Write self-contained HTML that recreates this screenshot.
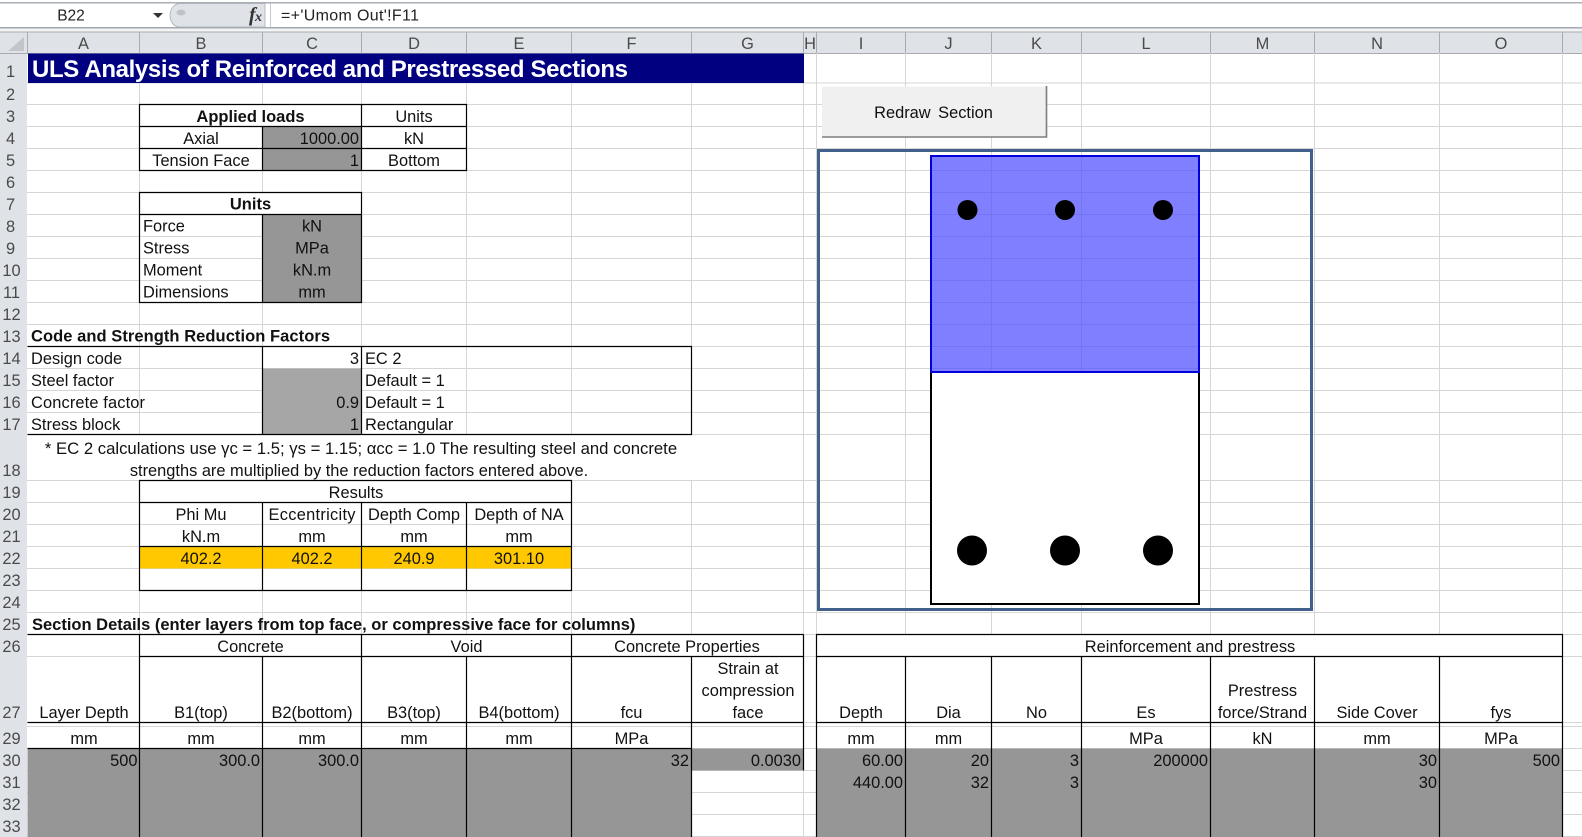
<!DOCTYPE html>
<html><head><meta charset="utf-8"><title>ULS Analysis</title>
<style>
html,body{margin:0;padding:0;background:#fff;overflow:hidden}
svg{display:block}
text{font-family:"Liberation Sans",Arial,sans-serif;font-size:16.4px;fill:#111}
.h text{fill:#4a4a4a;text-anchor:middle}
.c text,text.c{text-anchor:middle}
.r text,text.r{text-anchor:end}
.b{font-weight:bold;font-size:16.5px}
.g{stroke:#d6d6d6;stroke-width:1;fill:none}
.k{stroke:#000;stroke-width:1.2;fill:none}
.hb{stroke:#a8acb2;stroke-width:1;fill:none}
</style></head><body>
<svg xmlns="http://www.w3.org/2000/svg" width="1582" height="837" viewBox="0 0 1582 837">
<rect width="1582" height="837" fill="#fff"/>
<!-- top bars -->
<rect x="0" y="2" width="1582" height="1.5" fill="#a9afb6"/>
<rect x="0" y="27" width="1582" height="1.5" fill="#a3a9b0"/>
<rect x="0" y="28.5" width="1582" height="3" fill="#f3f4f6"/>
<path d="M265 3.5H180C174 3.5 170 9 170 15.5S174 27 180 27H265Z" fill="#dfe3e8" stroke="#a9aeb4" stroke-width=".8"/>
<ellipse cx="181" cy="12.5" rx="4.5" ry="3" fill="#bfc3c9"/>
<path d="M153 13H163L158 18Z" fill="#333"/>
<rect x="270" y="3.5" width="1" height="23.5" fill="#c6cacf"/>
<text x="71" y="20.5" class="c" style="font-size:15.5px;fill:#222">B22</text>
<text x="249" y="21" style="font-family:'Liberation Serif',serif;font-style:italic;font-weight:bold;font-size:20px;fill:#333">f</text>
<text x="255" y="21" style="font-family:'Liberation Serif',serif;font-style:italic;font-weight:bold;font-size:14px;fill:#333">x</text>
<text x="281" y="20.5" style="font-size:16px;fill:#222" textLength="138">=+'Umom Out'!F11</text>

<!-- column + row headers -->
<rect x="0" y="32" width="1582" height="21.5" fill="#dfe3e8"/>
<rect x="0" y="53.5" width="27" height="783.5" fill="#dfe3e8"/>
<path d="M8 51H24V37Z" fill="#c2c6cb"/>
<path class="hb" d="M0 32H1582M0 53.5H1582M27.5 32V53M139.5 32V53M262.5 32V53M361.5 32V53M466.5 32V53M571.5 32V53M691.5 32V53M803.5 32V53M816.5 32V53M905.5 32V53M991.5 32V53M1081.5 32V53M1210.5 32V53M1314.5 32V53M1439.5 32V53M1562.5 32V53"/>
<g class="h">
<text x="83.5" y="49">A</text><text x="201" y="49">B</text><text x="312" y="49">C</text><text x="414" y="49">D</text><text x="519" y="49">E</text><text x="631.5" y="49">F</text><text x="747.5" y="49">G</text><text x="810" y="49">H</text><text x="861" y="49">I</text><text x="948.5" y="49">J</text><text x="1036.5" y="49">K</text><text x="1146" y="49">L</text><text x="1262.5" y="49">M</text><text x="1377" y="49">N</text><text x="1501" y="49">O</text>
<text x="10.5" y="77">1</text><text x="10.5" y="100">2</text><text x="10.5" y="122">3</text><text x="10.5" y="144">4</text><text x="10.5" y="166">5</text><text x="10.5" y="188">6</text><text x="10.5" y="210">7</text><text x="10.5" y="232">8</text><text x="10.5" y="254">9</text>
<text x="11.5" y="276">10</text><text x="11.5" y="298">11</text><text x="11.5" y="320">12</text><text x="11.5" y="342">13</text><text x="11.5" y="364">14</text><text x="11.5" y="386">15</text><text x="11.5" y="408">16</text><text x="11.5" y="430">17</text><text x="11.5" y="476">18</text><text x="11.5" y="498">19</text><text x="11.5" y="520">20</text><text x="11.5" y="542">21</text><text x="11.5" y="564">22</text><text x="11.5" y="586">23</text><text x="11.5" y="608">24</text><text x="11.5" y="630">25</text><text x="11.5" y="652">26</text><text x="11.5" y="718">27</text><text x="11.5" y="744">29</text><text x="11.5" y="766">30</text><text x="11.5" y="788">31</text><text x="11.5" y="810">32</text><text x="11.5" y="832">33</text>
</g>

<!-- grid -->
<path class="g" d="M27 83H1582M27 104.5H1582M27 126.5H1582M27 148.5H1582M27 170.5H1582M27 192.5H1582M27 214.5H1582M27 236.5H1582M27 258.5H1582M27 280.5H1582M27 302.5H1582M27 324.5H1582M27 346.5H1582M27 368.5H1582M27 390.5H1582M27 412.5H1582M27 434.5H1582M27 480.5H1582M27 502.5H1582M27 524.5H1582M27 546.5H1582M27 568.5H1582M27 590.5H1582M27 612.5H1582M27 634.5H1582M27 656.5H1582M27 722.5H1582M27 726.5H1582M27 748.5H1582M27 770.5H1582M27 792.5H1582M27 814.5H1582M27 836.5H1582"/>
<path class="g" d="M139.5 53V837M262.5 53V837M361.5 53V837M466.5 53V837M571.5 53V837M691.5 53V837M803.5 53V837M816.5 53V837M905.5 53V837M991.5 53V837M1081.5 53V837M1210.5 53V837M1314.5 53V837M1439.5 53V837M1562.5 53V837"/>

<!-- title -->
<rect x="28" y="53.5" width="776" height="29.5" fill="#000080"/>
<text x="32" y="77" style="font-size:24px;font-weight:bold;fill:#fff" textLength="596">ULS Analysis of Reinforced and Prestressed Sections</text>

<!-- merged cells hide the grid -->
<rect x="28" y="435" width="664" height="45" fill="#fff"/>
<rect x="140" y="105" width="221" height="21" fill="#fff"/>
<rect x="140" y="193" width="221" height="21" fill="#fff"/>
<rect x="140" y="481" width="431" height="21" fill="#fff"/>
<rect x="140" y="635" width="663" height="21" fill="#fff"/>
<rect x="817" y="635" width="745" height="21" fill="#fff"/>

<!-- fills -->
<rect x="262.5" y="126.5" width="99" height="44" fill="#969696"/>
<rect x="262.5" y="214.5" width="99" height="88" fill="#969696"/>
<rect x="262.5" y="368.5" width="99" height="66" fill="#a6a6a6"/>
<rect x="139.5" y="546.5" width="432" height="22" fill="#ffc800"/>
<rect x="27.5" y="748.5" width="664" height="88.5" fill="#969696"/>
<rect x="691.5" y="748.5" width="112" height="22" fill="#969696"/>
<rect x="816.5" y="748.5" width="746" height="88.5" fill="#969696"/>

<!-- borders -->
<path class="k" d="M139.5 104.5H466.5V170.5H139.5ZM139.5 126.5H466.5M139.5 148.5H466.5M361.5 104.5V170.5M262.5 126.5V170.5"/>
<path class="k" d="M139.5 192.5H361.5V302.5H139.5ZM139.5 214.5H361.5M262.5 214.5V302.5"/>
<path class="k" d="M27.5 346.5H691.5V434.5H27.5M262.5 346.5V434.5M361.5 346.5V434.5"/>
<path class="k" d="M139.5 480.5H571.5V590.5H139.5ZM139.5 502.5H571.5M139.5 546.5H571.5M262.5 502.5V590.5M361.5 502.5V590.5M466.5 502.5V590.5"/>
<path class="k" d="M27.5 634.5H803.5M139.5 656.5H803.5M27.5 722.5H803.5M27.5 748.5H691.5M139.5 634.5V837M262.5 656.5V837M361.5 634.5V837M466.5 656.5V837M571.5 634.5V837M691.5 656.5V837M803.5 634.5V770.5"/>
<path class="k" d="M816.5 837V634.5H1562.5V837M816.5 656.5H1562.5M816.5 722.5H1562.5M905.5 656.5V837M991.5 656.5V837M1081.5 656.5V837M1210.5 656.5V837M1314.5 656.5V837M1439.5 656.5V837"/>

<!-- applied loads -->
<g class="c">
<text x="250.5" y="122" class="b">Applied loads</text>
<text x="414" y="122">Units</text>
<text x="201" y="144">Axial</text>
<text x="414" y="144">kN</text>
<text x="201" y="166">Tension Face</text>
<text x="414" y="166">Bottom</text>
<text x="250.5" y="209.5" class="b">Units</text>
<text x="312" y="231.5">kN</text><text x="312" y="253.5">MPa</text><text x="312" y="275.5">kN.m</text><text x="312" y="297.5">mm</text>
</g>
<g class="r"><text x="359" y="144">1000.00</text><text x="359" y="166">1</text>
<text x="359" y="364">3</text><text x="359" y="408">0.9</text><text x="359" y="430">1</text></g>
<text x="143" y="231.5">Force</text><text x="143" y="253.5">Stress</text><text x="143" y="275.5">Moment</text><text x="143" y="297.5">Dimensions</text>

<text x="31" y="341.5" class="b" textLength="299">Code and Strength Reduction Factors</text>
<text x="31" y="364">Design code</text><text x="31" y="386">Steel factor</text><text x="31" y="408" textLength="114">Concrete factor</text><text x="31" y="430">Stress block</text>
<text x="365" y="364">EC 2</text><text x="365" y="386">Default = 1</text><text x="365" y="408">Default = 1</text><text x="365" y="430">Rectangular</text>

<g class="c">
<text x="361" y="454" style="font-size:16.7px">* EC 2 calculations use γc = 1.5; γs = 1.15; αcc = 1.0 The resulting steel and concrete</text>
<text x="359" y="476" style="font-size:16.4px">strengths are multiplied by the reduction factors entered above.</text>
<text x="356" y="498">Results</text>
<text x="201" y="520">Phi Mu</text><text x="312" y="520" textLength="87">Eccentricity</text><text x="414" y="520">Depth Comp</text><text x="519" y="520">Depth of NA</text>
<text x="201" y="542">kN.m</text><text x="312" y="542">mm</text><text x="414" y="542">mm</text><text x="519" y="542">mm</text>
<text x="201" y="564">402.2</text><text x="312" y="564">402.2</text><text x="414" y="564">240.9</text><text x="519" y="564">301.10</text>
</g>

<text x="32" y="630" class="b">Section Details (enter layers from top face, or compressive face for columns)</text>

<g class="c">
<text x="250.5" y="652">Concrete</text><text x="466.5" y="652">Void</text><text x="687" y="652">Concrete Properties</text>
<text x="748" y="674">Strain at</text><text x="748" y="696">compression</text><text x="748" y="718">face</text>
<text x="84" y="718">Layer Depth</text><text x="201" y="718">B1(top)</text><text x="312" y="718">B2(bottom)</text><text x="414" y="718">B3(top)</text><text x="519" y="718">B4(bottom)</text><text x="631.5" y="718">fcu</text>
<text x="84" y="744">mm</text><text x="201" y="744">mm</text><text x="312" y="744">mm</text><text x="414" y="744">mm</text><text x="519" y="744">mm</text><text x="631.5" y="744">MPa</text>
<text x="1190" y="652">Reinforcement and prestress</text>
<text x="861" y="718">Depth</text><text x="948.5" y="718">Dia</text><text x="1036.5" y="718">No</text><text x="1146" y="718">Es</text>
<text x="1262.5" y="696">Prestress</text><text x="1262.5" y="718">force/Strand</text><text x="1377" y="718">Side Cover</text><text x="1501" y="718">fys</text>
<text x="861" y="744">mm</text><text x="948.5" y="744">mm</text><text x="1146" y="744">MPa</text><text x="1262.5" y="744">kN</text><text x="1377" y="744">mm</text><text x="1501" y="744">MPa</text>
</g>
<g class="r">
<text x="137.5" y="766">500</text>
<text x="260" y="766">300.0</text><text x="359" y="766">300.0</text><text x="689" y="766">32</text><text x="801" y="766">0.0030</text>
<text x="903" y="766">60.00</text><text x="989" y="766">20</text><text x="1079" y="766">3</text><text x="1208" y="766">200000</text><text x="1437" y="766">30</text><text x="1560" y="766">500</text>
<text x="903" y="788">440.00</text><text x="989" y="788">32</text><text x="1079" y="788">3</text><text x="1437" y="788">30</text>
</g>

<!-- button -->
<rect x="822" y="86.5" width="224" height="50" fill="#f0f0f0"/>
<path d="M1046.5 86V137H822" fill="none" stroke="#7d7d7d" stroke-width="1.6"/>
<text x="933.5" y="118" class="c" style="word-spacing:3px">Redraw Section</text>

<!-- section drawing -->
<rect x="818.5" y="150.5" width="493" height="459" fill="none" stroke="#41608a" stroke-width="3"/>
<rect x="931" y="372" width="268" height="232" fill="#fff" stroke="#000" stroke-width="2"/>
<rect x="931" y="156" width="268" height="216" fill="#fff" fill-opacity=".45"/>
<rect x="931" y="156" width="268" height="216" fill="#0000ff" fill-opacity=".5" stroke="#0000d8" stroke-width="2"/>
<circle cx="967.5" cy="210" r="10" fill="#000"/><circle cx="1065" cy="210" r="10" fill="#000"/><circle cx="1163" cy="210" r="10" fill="#000"/>
<circle cx="972" cy="550.5" r="15" fill="#000"/><circle cx="1065" cy="550.5" r="15" fill="#000"/><circle cx="1158" cy="550.5" r="15" fill="#000"/>
</svg>
</body></html>
